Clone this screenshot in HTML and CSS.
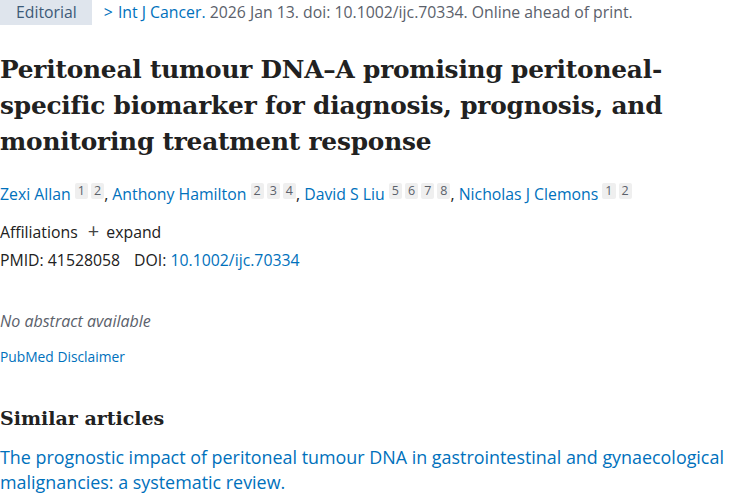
FILE: index.html
```html
<!DOCTYPE html>
<html>
<head>
<meta charset="utf-8">
<link rel="stylesheet" href="styles.css">
</head>
<body>
<main class="article">
  <div class="meta">
    <span class="pubtype">Editorial</span>
    <span class="cit"><span class="chev">&gt;</span> <a class="journal">Int J Cancer.</a> 2026 Jan 13. doi: 10.1002/ijc.70334. Online ahead of print.</span>
  </div>
  <h1 class="title">Peritoneal tumour DNA–A promising peritoneal‑ specific biomarker for diagnosis, prognosis, and monitoring treatment response</h1>
  <div class="authors">
    <a>Zexi Allan</a> <sup class="refs"><span>1</span><span>2</span></sup>, <a>Anthony Hamilton</a> <sup class="refs"><span>2</span><span>3</span><span>4</span></sup>, <a>David S Liu</a> <sup class="refs"><span>5</span><span>6</span><span>7</span><span>8</span></sup>, <a>Nicholas J Clemons</a> <sup class="refs"><span>1</span><span>2</span></sup>
  </div>
  <div class="affil">Affiliations <span class="plus">+</span> expand</div>
  <div class="ids"><span>PMID: 41528058</span><span>DOI: <a>10.1002/ijc.70334</a></span></div>
  <p class="noabs">No abstract available</p>
  <a class="disclaimer">PubMed Disclaimer</a>
  <h2 class="similar">Similar articles</h2>
  <a class="sim-link">The prognostic impact of peritoneal tumour DNA in gastrointestinal and gynaecological malignancies: a systematic review.</a>
</main>
</body>
</html>
```
FILE: styles.css
```css
html, body { margin: 0; padding: 0; background: #fff; }
body { font-family: "Open Sans", "Noto Sans", sans-serif; color: #212121; }
a { color: #0071bc; text-decoration: none; }
.article { padding: 0; width: 745px; display: flex; flex-direction: column; align-items: flex-start; }
.meta { display: flex; align-items: center; font-size: 15.8px; height: 26px; margin-top: -1px; }
.pubtype { background: #dfe5ed; color: #3d5a78; padding: 0 15px 0 16px; height: 26px; line-height: 26px; margin-right: 12px; }
.cit { color: #5b616b; }
.chev { color: #0071bc; margin-right: 1px; }
.title { font-family: "DejaVu Serif", serif; font-weight: bold; font-size: 24.8px; line-height: 36px; color: #212121; margin: 27px 0 0 0; letter-spacing: -0.2px; width: 700px; }
.authors { margin-top: 20px; font-size: 15.8px; line-height: 22px; color: #212121; }
.refs { font-size: 12.5px; vertical-align: 5px; color: #5b616b; }
.refs span { display: inline-block; background: #efefef; padding: 0 3px; line-height: 16px; border-radius: 2px; margin-right: 3px; }
.refs span:last-child { margin-right: 0; }
.affil { margin-top: 15px; font-size: 15.8px; line-height: 22px; }
.plus { font-size: 20px; margin: 0 3px 0 6px; color: #444; }
.ids { margin-top: 6px; font-size: 15.8px; line-height: 22px; display: flex; gap: 14px; }
.noabs { margin: 39px 0 0 0; font-style: italic; color: #5b616b; font-size: 16px; line-height: 22px; }
.disclaimer { margin-top: 15px; font-size: 13.8px; line-height: 20px; }
.similar { font-family: "DejaVu Serif", serif; font-weight: bold; font-size: 19px; line-height: 28px; margin: 37px 0 0 0; color: #212121; }
.sim-link { margin-top: 13px; font-size: 17.9px; line-height: 25px; width: 745px; }
```
